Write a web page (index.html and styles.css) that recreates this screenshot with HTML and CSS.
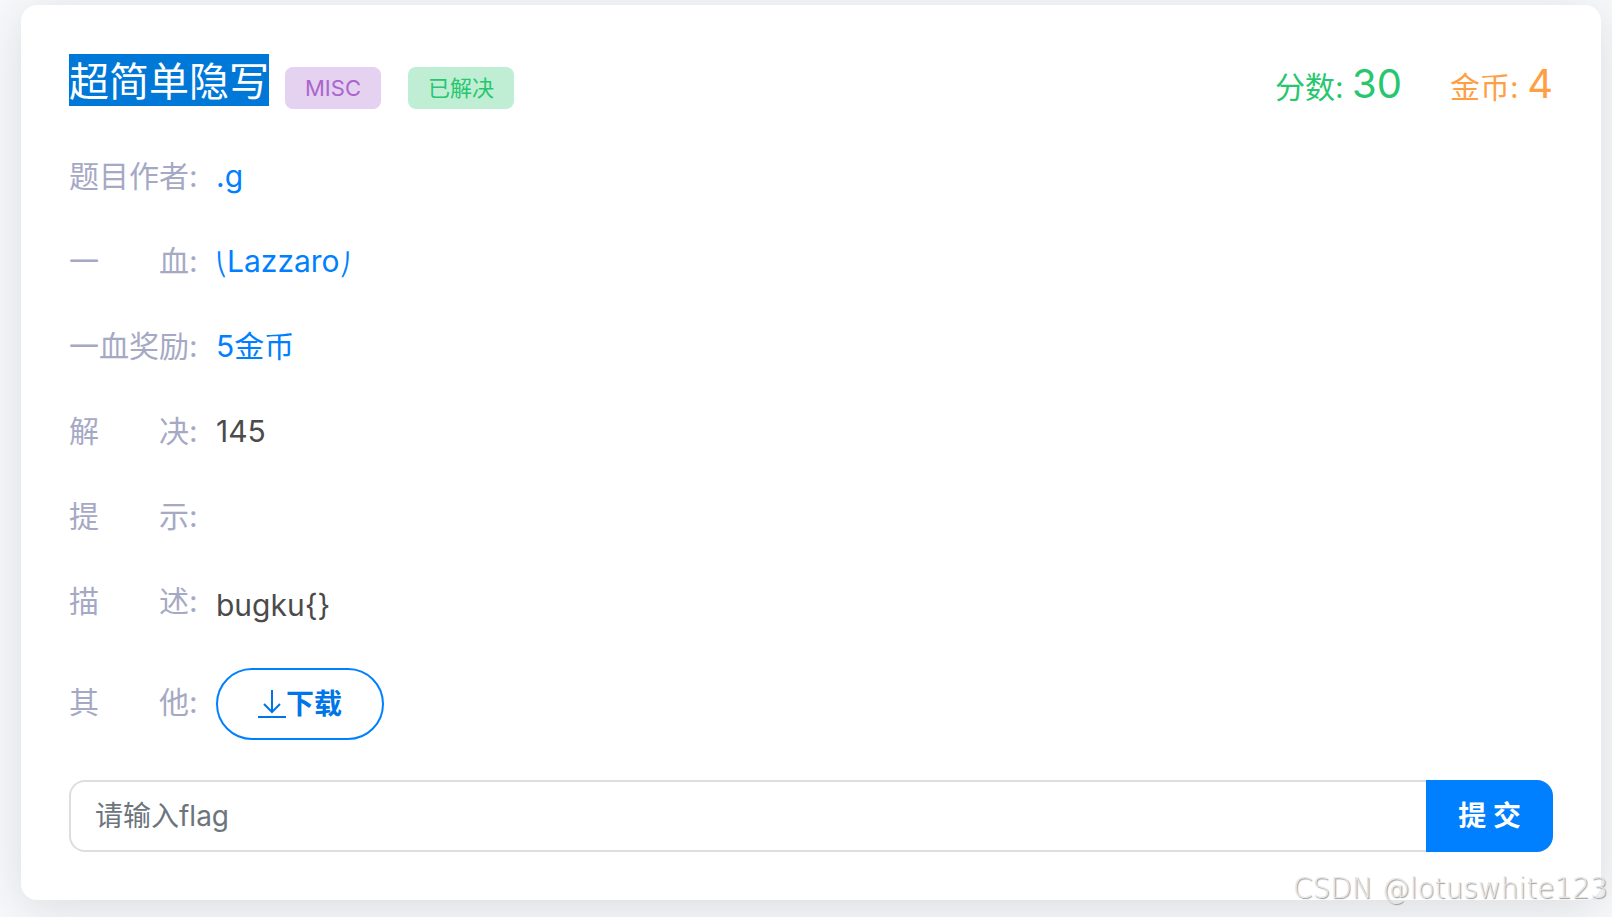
FILE: index.html
```
<!DOCTYPE html>
<html lang="zh-CN">
<head>
    <meta charset="UTF-8">
    <meta name="viewport" content="width=device-width, initial-scale=1.0">
    <title>超简单隐写</title>
    <link rel="stylesheet" href="styles.css">
</head>
<body>

<main class="card">
    <header class="card-header">
        <h1 class="title"><span class="selected">超简单隐写</span></h1>
        <span class="badge badge-purple">MISC</span>
        <span class="badge badge-green">已解决</span>
        <div class="points">
            <span class="score">分数: <span class="number">30</span></span>
            <span class="coin">金币: <span class="number">4</span></span>
        </div>
    </header>

    <dl class="info">
        <div class="row">
            <dt>题目作者:</dt>
            <dd><a href="#">.g</a></dd>
        </div>
        <div class="row">
            <dt>一　　血:</dt>
            <dd><a href="#"><span class="bracket">⎝</span>Lazzaro<span class="bracket">⎠</span></a></dd>
        </div>
        <div class="row">
            <dt>一血奖励:</dt>
            <dd class="reward">5金币</dd>
        </div>
        <div class="row">
            <dt>解　　决:</dt>
            <dd>145</dd>
        </div>
        <div class="row">
            <dt>提　　示:</dt>
            <dd></dd>
        </div>
        <div class="row row-desc">
            <dt>描　　述:</dt>
            <dd><p class="desc">bugku{}</p></dd>
        </div>
        <div class="row row-file">
            <dt>其　　他:</dt>
            <dd>
                <button type="button" class="download">
                    <svg class="icon" viewBox="0 0 28 28" fill="none" stroke="currentColor" stroke-width="2" aria-hidden="true">
                        <path d="M14 0V21M6 14L14 22L22 14M0 27H28"/>
                    </svg>下载
                </button>
            </dd>
        </div>
    </dl>

    <form class="flag-form" onsubmit="return false">
        <input type="text" class="flag-input" placeholder="请输入flag" aria-label="请输入flag">
        <button type="submit" class="submit">提 交</button>
    </form>
</main>

<div class="watermark">CSDN @lotuswhite123</div>

</body>
</html>
```
FILE: styles.css
```
* { box-sizing: border-box; }
body {
    margin: 0;
    padding: 5px 11px 17px 21px;
    background-color: #f8f9fb;
    color: #4b4b4b;
    font-family: Inter, "Noto Sans CJK SC", sans-serif;
    font-size: 30px;
    line-height: 45px;
    overflow: hidden;
}
a { color: #0080ff; text-decoration: none; }

.card {
    padding: 48px;
    border-radius: 16px;
    background-color: #fff;
    box-shadow: 0 8px 50px rgba(34, 41, 47, 0.14);
}

/* Title, badges and points */
.card-header { display: flex; align-items: flex-start; height: 60px; }
.title { margin: 1px 16px 0 0; font-size: 40px; font-weight: 400; line-height: 48px; }
.selected { display: block; padding-top: 4px; background-color: #0078d7; color: #fff; }
.badge {
    margin: 14px 27px 0 0;
    padding: 0 20px;
    border-radius: 8px;
    font-size: 22px;
    line-height: 42px;
}
.badge-purple { background-color: #e5d1f0; color: #aa66cc; }
.badge-green { background-color: #bfeed4; color: #28c76f; }
.points { display: flex; gap: 48px; margin-left: auto; line-height: 62px; }
.score { color: #28c76f; }
.coin { color: #ff9f43; }
.number { font-size: 40px; }

/* Info rows */
.info { margin: 21px 0 0; }
.row { display: grid; grid-template-columns: 129px 1fr; column-gap: 18px; align-items: center; min-height: 85px; }
dt { color: #a6a9c4; white-space: nowrap; }
dd { margin: 0; }
.reward { color: #0080ff; }
.bracket { font-family: "DejaVu Sans", sans-serif; font-size: 22px; line-height: 1; }
.desc { margin: 0; padding-top: 8px; }
.row-file { min-height: 116px; }
.download {
    display: flex;
    align-items: center;
    height: 72px;
    margin-top: 4px;
    padding: 0 40px;
    border: 2px solid #0080ff;
    border-radius: 36px;
    background-color: #fff;
    color: #0075e8;
    font: 700 28px/42px Inter, "Noto Sans CJK SC", sans-serif;
}
.icon { width: 28px; height: 28px; }

/* Flag form */
.flag-form { display: flex; margin-top: 20px; }
.flag-input {
    flex: 1;
    min-width: 0;
    height: 72px;
    padding: 0 24px;
    border: 2px solid #dedede;
    border-right: 0;
    border-radius: 16px 0 0 16px;
    color: #4b4b4b;
    font: 400 28px/42px Inter, "Noto Sans CJK SC", sans-serif;
}
.flag-input::placeholder { color: #6c757d; opacity: 1; }
.submit {
    padding: 0 32px;
    border: 0;
    border-radius: 0 16px 16px 0;
    background-color: #0080ff;
    color: #fff;
    font: 700 28px/42px Inter, "Noto Sans CJK SC", sans-serif;
}

.watermark {
    position: absolute;
    right: 4px;
    bottom: 6px;
    color: #e6e6e6;
    font-family: "DejaVu Sans", sans-serif;
    font-size: 28px;
    font-weight: 200;
    line-height: 44px;
    text-shadow: 1px 1px 1px #999;
}
```
